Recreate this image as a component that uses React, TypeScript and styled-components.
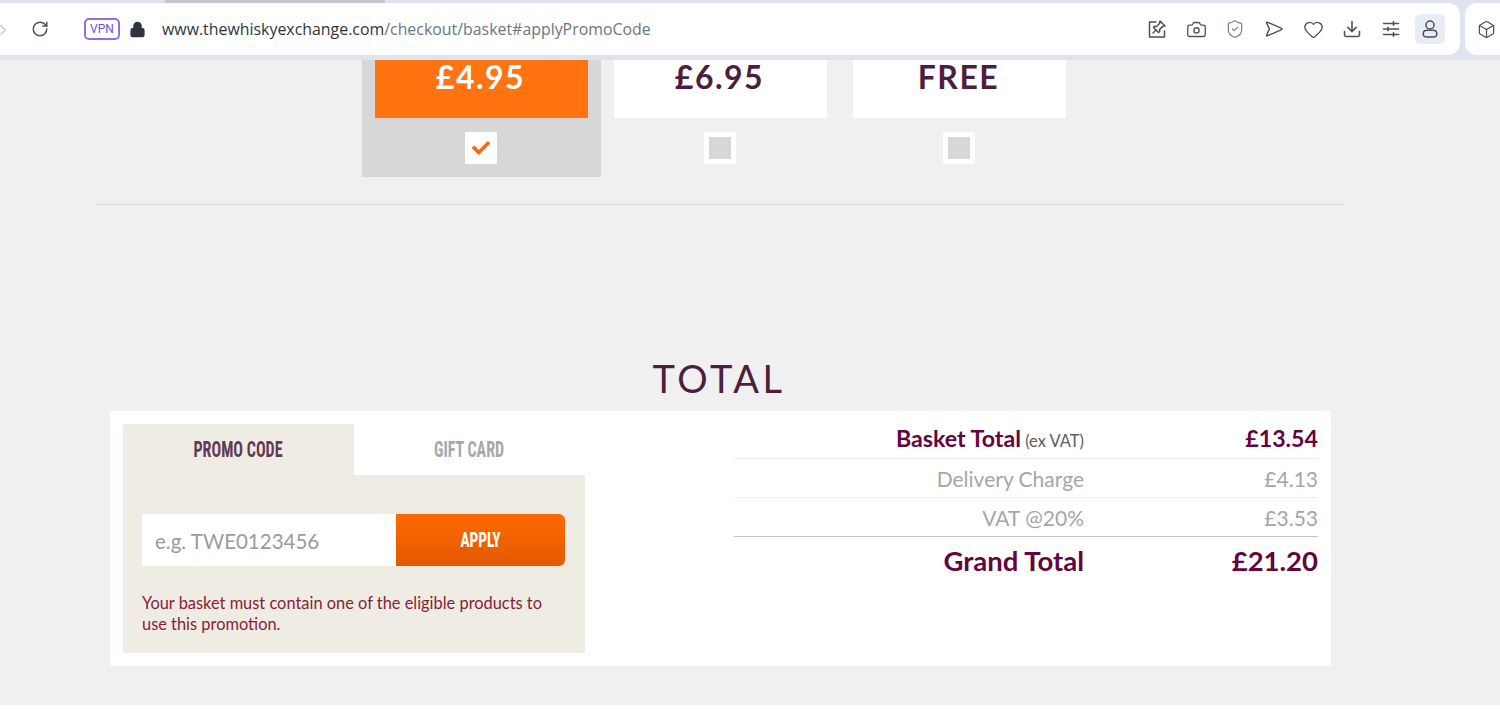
import React from 'react';
import styled, { createGlobalStyle } from 'styled-components';
import { FaCheck } from 'react-icons/fa';
import { Box, Camera, ChevronRight, Download, Heart, Lock, RotateCw, ShieldCheck } from 'lucide-react';

const PLUM = '#4d1e3f';
const WINE = '#63063f';
const GREY = '#a6a6a6';
const BEIGE = '#efece4';
const ICON = '#4a525c';
const NARROW = '"Liberation Sans Narrow", "Roboto Condensed", "Liberation Sans", sans-serif';

const GlobalStyle = createGlobalStyle`
  html, body {
    margin: 0;
    padding: 0;
    background: #fff;
    font-family: Lato, "Liberation Sans", sans-serif;
  }
  * {
    box-sizing: border-box;
  }
`;

const deliveryOptions = [
  { price: '£4.95', selected: true },
  { price: '£6.95', selected: false },
  { price: 'FREE', selected: false },
];

const totals = [
  { label: 'Basket Total', note: '(ex VAT)', value: '£13.54', kind: 'main' as const },
  { label: 'Delivery Charge', value: '£4.13', kind: 'muted' as const },
  { label: 'VAT @20%', value: '£3.53', kind: 'muted' as const },
  { label: 'Grand Total', value: '£21.20', kind: 'grand' as const },
];

const EditPinIcon = () => (
  <svg width="20" height="20" viewBox="0 0 20 20" fill="none" stroke={ICON} strokeWidth="1.5" strokeLinejoin="round" strokeLinecap="round">
    <path d="M9 3H2.5v15h15v-6" />
    <path d="M13 2l5 5-2.5.6-3 3 .2 2-1.2.9-5-5 1-1.2 2 .2 3-3z" />
    <path d="M8.5 11.5L6 14" />
  </svg>
);

const SendIcon = () => (
  <svg width="20" height="20" viewBox="0 0 20 20" fill="none" stroke={ICON} strokeWidth="1.4" strokeLinejoin="round">
    <path d="M3.4 3.2c-.5-.3-1 .2-.8.7L5.4 10l-2.8 6.1c-.2.5.3 1 .8.7L17.6 10.6c.5-.2.5-1 0-1.2z" />
  </svg>
);

const SlidersIcon = () => (
  <svg width="18" height="18" viewBox="0 0 18 18" fill="none" stroke={ICON} strokeWidth="1.6" strokeLinecap="round">
    <path d="M1.5 3.5h15M1.5 9h15M1.5 14.5h15" />
    <path d="M11.5 1.8v3.4M6 7.3v3.4M11.5 12.8v3.4" />
  </svg>
);

const ProfileIcon = () => (
  <svg width="20" height="20" viewBox="0 0 20 20" fill="none" stroke={ICON} strokeWidth="1.5">
    <circle cx="10" cy="6" r="4" />
    <path d="M7 11.2h6c2.3 0 3.8 1.6 3.8 3.5 0 1.9-1.5 3.3-3.6 3.3H6.800c-2.100 0-3.600-1.400-3.600-3.300 0-1.900 1.500-3.500 3.800-3.500z" />
  </svg>
);

const App = () => (
  <Page>
    <GlobalStyle />
    <BrowserBar>
      <TopHighlight />
      <ForwardSlot>
        <ChevronRight size={18} color="#c3c7cc" strokeWidth={1.5} />
      </ForwardSlot>
      <BarRow>
        <AddressBar>
          <RotateCw size={18} color={ICON} strokeWidth={2} />
          <VpnBadge>VPN</VpnBadge>
          <Lock size={17} color="#2e3540" fill="#2e3540" strokeWidth={2} />
          <Url>
            <UrlHost>www.thewhiskyexchange.com</UrlHost>/checkout/basket#applyPromoCode
          </Url>
          <ToolIcons>
            <ToolButton>
              <EditPinIcon />
            </ToolButton>
            <ToolButton>
              <Camera size={21} color={ICON} strokeWidth={1.5} />
            </ToolButton>
            <ToolButton>
              <ShieldCheck size={20} color="#7c848d" strokeWidth={1.5} />
            </ToolButton>
            <ToolButton>
              <SendIcon />
            </ToolButton>
            <ToolButton>
              <Heart size={21} color={ICON} strokeWidth={1.5} />
            </ToolButton>
            <ToolButton>
              <Download size={20} color={ICON} strokeWidth={1.9} />
            </ToolButton>
            <ToolButton>
              <SlidersIcon />
            </ToolButton>
            <ToolButton $active>
              <ProfileIcon />
            </ToolButton>
          </ToolIcons>
        </AddressBar>
        <ExtensionTab>
          <Box size={19} color={ICON} strokeWidth={1.6} />
        </ExtensionTab>
      </BarRow>
    </BrowserBar>

    <Main>
      <Options>
        {deliveryOptions.map((option) => (
          <Option key={option.price} $selected={option.selected}>
            <PriceBox $selected={option.selected}>{option.price}</PriceBox>
            <CheckBox $selected={option.selected}>
              {option.selected && <FaCheck size={18} color="#f4691a" />}
            </CheckBox>
          </Option>
        ))}
      </Options>
      <Divider />
      <Heading>TOTAL</Heading>
      <Card>
        <PromoColumn>
          <Tabs>
            <Tab $active>
              <NarrowText>PROMO CODE</NarrowText>
            </Tab>
            <Tab>
              <NarrowText>GIFT CARD</NarrowText>
            </Tab>
          </Tabs>
          <PromoPanel>
            <PromoForm>
              <PromoInput placeholder="e.g. TWE0123456" />
              <ApplyButton>
                <NarrowText>APPLY</NarrowText>
              </ApplyButton>
            </PromoForm>
            <PromoError>Your basket must contain one of the eligible products to use this promotion.</PromoError>
          </PromoPanel>
        </PromoColumn>
        <TotalsColumn>
          {totals.map((row) => (
            <TotalRow key={row.label} $kind={row.kind}>
              <TotalLabel>
                {row.label}
                {row.note && <TotalNote> {row.note}</TotalNote>}
              </TotalLabel>
              <TotalValue>{row.value}</TotalValue>
            </TotalRow>
          ))}
        </TotalsColumn>
      </Card>
    </Main>
  </Page>
);

export default App;

const Page = styled.div`
  width: 1500px;
  height: 718px;
  display: flex;
  flex-direction: column;
  overflow: hidden;
`;

const BrowserBar = styled.header`
  position: relative;
  height: 60px;
  flex-shrink: 0;
  padding: 3px 0 5px;
  background: #dde4ee;
`;

const TopHighlight = styled.div`
  position: absolute;
  top: 0;
  left: 165px;
  width: 220px;
  height: 3px;
  background: #c3c8cf;
`;

const ForwardSlot = styled.div`
  position: absolute;
  z-index: 1;
  left: -6px;
  top: 21px;
  display: flex;
`;

const BarRow = styled.div`
  display: flex;
  height: 100%;
  gap: 5px;
`;

const AddressBar = styled.div`
  width: 1460px;
  display: flex;
  align-items: center;
  background: #fff;
  border-radius: 0 12px 12px 0;
  padding-left: 31px;
  padding-right: 15px;
`;

const VpnBadge = styled.div`
  width: 36px;
  height: 22px;
  margin-left: 35px;
  margin-right: 9px;
  display: flex;
  align-items: center;
  justify-content: center;
  border: 2px solid #8a6ff0;
  border-radius: 5px;
  color: #6d55d8;
  font-family: Roboto, sans-serif;
  font-size: 12px;
`;

const Url = styled.div`
  margin-left: 16px;
  flex: 1;
  color: #6b7680;
  font-family: "Open Sans", sans-serif;
  font-size: 15.9px;
  white-space: nowrap;
`;

const UrlHost = styled.span`
  color: #2f343a;
`;

const ToolIcons = styled.div`
  display: flex;
  align-items: center;
  gap: 9px;
`;

const ToolButton = styled.div<{ $active?: boolean }>`
  width: 30px;
  height: 30px;
  display: flex;
  align-items: center;
  justify-content: center;
  border-radius: 6px;
  background: ${(p) => (p.$active ? '#e8edf3' : 'transparent')};
`;

const ExtensionTab = styled.div`
  flex: 1;
  display: flex;
  align-items: center;
  padding-left: 12px;
  background: #fff;
  border-radius: 12px 0 0 12px;
`;

const Main = styled.main`
  height: 645px;
  flex-shrink: 0;
  width: 100%;
  background: #f0f0f0;
`;

const Options = styled.div`
  width: 717px;
  margin-left: 362px;
  display: flex;
`;

const Option = styled.div<{ $selected: boolean }>`
  width: 239px;
  height: 117px;
  padding: 0 13px;
  background: ${(p) => (p.$selected ? '#d7d7d7' : 'transparent')};
`;

const PriceBox = styled.div<{ $selected: boolean }>`
  height: 58px;
  padding-right: 2px;
  text-align: center;
  line-height: 34px;
  font-size: 32px;
  font-weight: 700;
  letter-spacing: 1.5px;
  background: ${(p) => (p.$selected ? '#ff7311' : '#fff')};
  color: ${(p) => (p.$selected ? '#fff' : PLUM)};
`;

const CheckBox = styled.div<{ $selected: boolean }>`
  width: 32px;
  height: 32px;
  margin: 14px 0 0 90px;
  display: flex;
  align-items: center;
  justify-content: center;
  border: 5px solid #fff;
  background: ${(p) => (p.$selected ? '#fff' : '#d7d7d7')};
`;

const Divider = styled.hr`
  width: 1247px;
  height: 1px;
  margin: 27px 0 0 97px;
  border: 0;
  background: #d9d9d9;
`;

const Heading = styled.h2`
  width: 1438px;
  height: 48px;
  margin: 149px 0 9px;
  text-align: center;
  line-height: 48px;
  font-size: 38px;
  font-weight: 400;
  letter-spacing: 3.5px;
  color: ${PLUM};
`;

const Card = styled.section`
  width: 1221px;
  height: 255px;
  margin-left: 110px;
  padding: 13px;
  display: flex;
  background: #fff;
`;

const PromoColumn = styled.div`
  width: 462px;
  display: flex;
  flex-direction: column;
`;

const Tabs = styled.div`
  display: flex;
  height: 51px;
`;

const NarrowText = styled.span`
  display: inline-block;
  transform: scaleX(0.73);
  white-space: nowrap;
`;

const Tab = styled.div<{ $active?: boolean }>`
  width: 231px;
  display: flex;
  align-items: center;
  justify-content: center;
  font-family: ${NARROW};
  font-size: 22px;
  font-weight: 700;
  background: ${(p) => (p.$active ? BEIGE : '#fff')};
  color: ${(p) => (p.$active ? '#633a56' : '#a8a8a8')};
`;

const PromoPanel = styled.div`
  flex: 1;
  padding: 39px 19px 0;
  background: ${BEIGE};
`;

const PromoForm = styled.div`
  display: flex;
  width: 423px;
  height: 52px;
`;

const PromoInput = styled.input`
  width: 254px;
  height: 100%;
  padding: 2px 0 0 13px;
  border: 0;
  outline: 0;
  background: #fff;
  font-family: Lato, sans-serif;
  font-size: 20.5px;
  &::placeholder {
    color: #9b9b9b;
    opacity: 1;
  }
`;

const ApplyButton = styled.button`
  flex: 1;
  padding: 0;
  border: 0;
  border-radius: 0 6px 6px 0;
  background: linear-gradient(#ff6a00, #e35a00);
  color: #fff;
  font-family: ${NARROW};
  font-size: 21px;
  font-weight: 700;
`;

const PromoError = styled.p`
  margin: 26px 0 0;
  width: 405px;
  font-size: 16.4px;
  line-height: 21px;
  color: #8a1c34;
`;

const TotalsColumn = styled.div`
  width: 584px;
  margin-left: 149px;
`;

const rowStyles = {
  main: { height: 35, pad: 7, font: 23.2, weight: 700, color: WINE, border: '#eeeeee' },
  muted: { height: 39, pad: 0, font: 21, weight: 400, color: GREY, border: '#eeeeee' },
  grand: { height: 50, pad: 2, font: 27.5, weight: 700, color: WINE, border: 'transparent' },
};

const TotalRow = styled.div<{ $kind: keyof typeof rowStyles }>`
  display: flex;
  align-items: center;
  height: ${(p) => rowStyles[p.$kind].height}px;
  padding-bottom: ${(p) => rowStyles[p.$kind].pad}px;
  font-size: ${(p) => rowStyles[p.$kind].font}px;
  font-weight: ${(p) => rowStyles[p.$kind].weight};
  color: ${(p) => rowStyles[p.$kind].color};
  border-bottom: 1px solid ${(p) => rowStyles[p.$kind].border};
  &:nth-child(3) {
    border-bottom-color: #c4c4c4;
  }
`;

const TotalLabel = styled.div`
  width: 350px;
  text-align: right;
  white-space: nowrap;
`;

const TotalNote = styled.span`
  font-size: 16.5px;
  font-weight: 400;
  color: #5e5e5e;
`;

const TotalValue = styled.div`
  flex: 1;
  text-align: right;
`;
